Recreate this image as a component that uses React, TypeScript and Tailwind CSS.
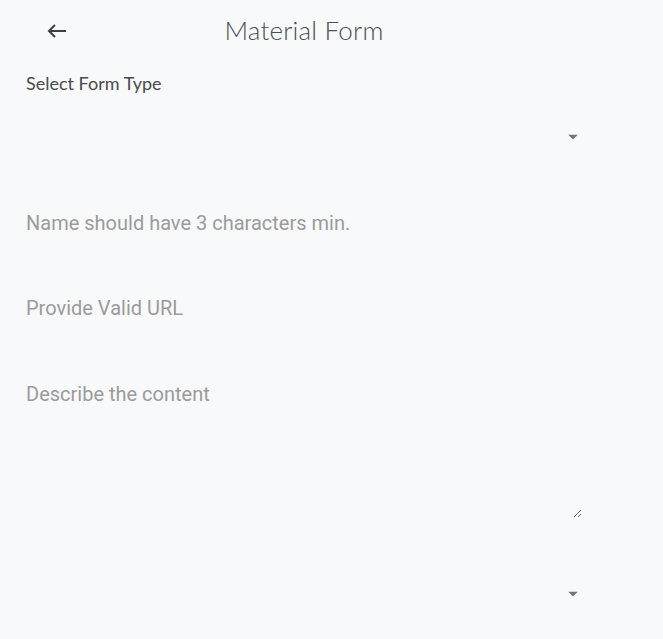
import React, { useState } from 'react';

const Caret: React.FC = () => (
  <svg className="pointer-events-none absolute right-[4px] top-1/2 -translate-y-1/2 w-[10px] h-[5px]" viewBox="0 0 10 5">
    <path d="M0 0h10L5 5z" fill="#757575" />
  </svg>
);

const App: React.FC = () => {
  const [formType, setFormType] = useState('');
  const [category, setCategory] = useState('');
  const [name, setName] = useState('');
  const [url, setUrl] = useState('');
  const [content, setContent] = useState('');

  const fieldClass =
    'w-full bg-transparent border-none outline-none text-[20px] text-[#333] placeholder-[#9b9b9b] [font-family:Roboto,sans-serif]';

  return (
    <div className="min-h-screen w-full bg-[#f8f9fa] [font-family:Lato,sans-serif]">
      {/* Header */}
      <div className="ml-[26px] w-[556px] h-[62px] grid grid-cols-[1fr_auto_1fr] items-center">
        <button className="justify-self-start ml-[20px] w-[22px] h-[22px] flex items-center justify-center text-[#3c4043]">
          <svg className="w-[20px] h-[14px]" viewBox="0 0 20 14" fill="none" stroke="currentColor" strokeWidth={2}>
            <path d="M19 7H2M8 1L2 7l6 6" />
          </svg>
        </button>
        <h1 className="text-[26px] font-light text-[#4a4f55] leading-none tracking-[0.2px] -mt-[2px]">Material Form</h1>
        <div />
      </div>

      {/* Form */}
      <form className="ml-[26px] w-[556px] flex flex-col" onSubmit={(e) => e.preventDefault()}>
        <label className="text-[18px] text-[#4a4a4a] leading-[22px] mt-[10px]">Select Form Type</label>

        <div className="relative h-[50px] mt-[18px]">
          <select
            value={formType}
            onChange={(e) => setFormType(e.target.value)}
            className="appearance-none w-full h-full bg-transparent border-none outline-none text-[18px] [font-family:Roboto,sans-serif]"
          >
            <option value="" />
            <option value="contact">Contact</option>
            <option value="survey">Survey</option>
          </select>
          <Caret />
        </div>

        <div className="h-[50px] mt-[36px] flex items-center">
          <input
            value={name}
            onChange={(e) => setName(e.target.value)}
            placeholder="Name should have 3 characters min."
            className={fieldClass}
          />
        </div>

        <div className="h-[50px] mt-[35px] flex items-center">
          <input
            value={url}
            onChange={(e) => setUrl(e.target.value)}
            placeholder="Provide Valid URL"
            className={fieldClass}
          />
        </div>

        <textarea
          value={content}
          onChange={(e) => setContent(e.target.value)}
          placeholder="Describe the content"
          className={`${fieldClass} mt-[35px] h-[150px] leading-[24px] pt-[14px] pb-[12px]`}
        />

        <div className="relative h-[50px] mt-[51px]">
          <select
            value={category}
            onChange={(e) => setCategory(e.target.value)}
            className="appearance-none w-full h-full bg-transparent border-none outline-none text-[18px] [font-family:Roboto,sans-serif]"
          >
            <option value="" />
            <option value="a">Option A</option>
            <option value="b">Option B</option>
          </select>
          <Caret />
        </div>
      </form>
    </div>
  );
};

export default App;
